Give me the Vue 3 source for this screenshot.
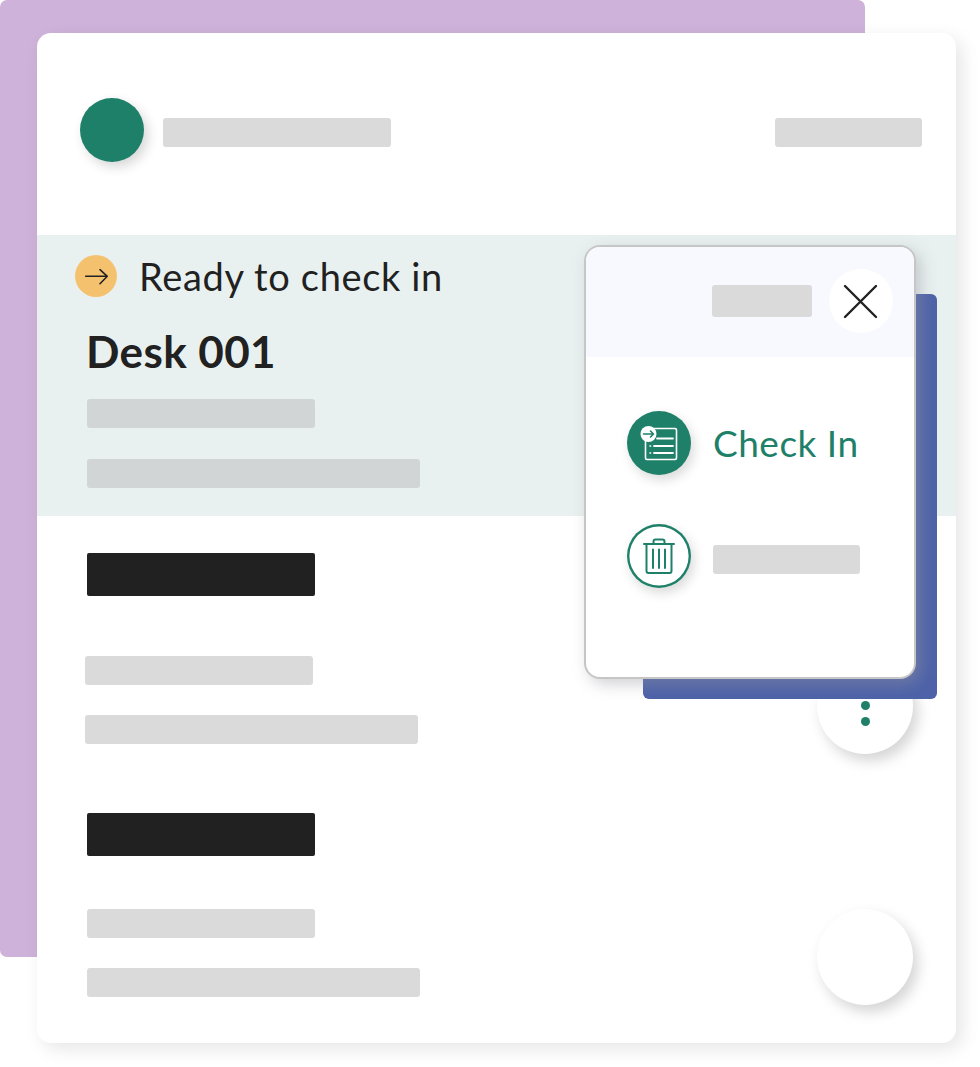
<script setup>
</script>

<template>
  <main class="scene">
    <div class="backdrop"></div>
    <section class="card">
      <header class="top">
        <div class="avatar"></div>
        <div class="bar w228 name"></div>
        <div class="bar w147 tail"></div>
      </header>

      <section class="band">
        <div class="status">
          <span class="arrow-badge">
            <svg width="42" height="42" viewBox="0 0 42 42" fill="none" stroke="#212121" stroke-width="1.6" stroke-linecap="round" stroke-linejoin="round">
              <path d="M10.7 21.3H32.3M25 14.7l7.3 6.6-7.3 7.4" />
            </svg>
          </span>
          <span class="status-text">Ready to check in</span>
        </div>
        <h1 class="desk">Desk 001</h1>
        <div class="bar w228 tinted first"></div>
        <div class="bar w333 tinted second-tight"></div>
      </section>

      <section class="entry one">
        <div class="block"></div>
        <div class="bar w228 shifted first-after"></div>
        <div class="bar w333 shifted second"></div>
      </section>

      <section class="entry two">
        <div class="block"></div>
        <div class="bar w228 first-after-b"></div>
        <div class="bar w333 second"></div>
      </section>

      <div class="fab kebab">
        <i></i><i></i><i></i>
      </div>
      <div class="fab lower"></div>
    </section>

    <div class="blue-sheet"></div>
    <aside class="menu">
      <div class="menu-head">
        <div class="bar head-bar"></div>
        <button class="close" aria-label="Close">
          <svg width="64" height="64" viewBox="0 0 64 64" fill="none" stroke="#212121" stroke-width="2.4" stroke-linecap="round">
            <path d="M16 17L47 48M47 17L16 48" />
          </svg>
        </button>
      </div>
      <div class="menu-body">
        <div class="menu-row">
          <span class="round solid">
            <svg width="64" height="64" viewBox="0 0 64 64" fill="none" stroke="#fff" stroke-width="1.6" stroke-linecap="round" stroke-linejoin="round">
              <rect x="18.5" y="17.5" width="31" height="31" rx="1.5" />
              <path stroke-width="1.8" d="M30 27.5H46M27 35H46M27 42H46" />
              <path stroke-width="1.6" d="M23 35h.6M23 42h.6" />
              <circle cx="21.5" cy="23" r="8" fill="#fff" stroke="none" />
              <path stroke="#1f8069" stroke-width="1.6" d="M16.5 23H26.5M23.5 20l3 3-3 3" />
            </svg>
          </span>
          <span class="check-label">Check In</span>
        </div>
        <div class="menu-row second-row">
          <span class="round outline">
            <svg width="64" height="64" viewBox="0 0 64 64" fill="none" stroke="#1f8069" stroke-width="2" stroke-linecap="round" stroke-linejoin="round">
              <path d="M17 20H47M26.5 20v-2.5q0-2 2-2h7q2 0 2 2V20" />
              <path d="M19.5 20v27q0 2 2 2h21q2 0 2-2V20" />
              <path d="M26 25.5V44M32 25.5V44M38 25.5V44" />
            </svg>
          </span>
          <div class="bar action-bar"></div>
        </div>
      </div>
    </aside>
  </main>
</template>

<style scoped>
.scene {
  position: relative;
  width: 980px;
  height: 1067px;
  overflow: hidden;
  background: #fff;
  font-family: "Lato", "Noto Sans", sans-serif;
  color: #212121;
}
.backdrop {
  position: absolute;
  left: 0;
  top: 0;
  width: 865px;
  height: 957px;
  background: #cfb2d9;
  border-radius: 7px;
}
.card {
  position: absolute;
  left: 37px;
  top: 33px;
  width: 919px;
  height: 1010px;
  background: #fff;
  border-radius: 14px;
  box-shadow: 6px 6px 18px rgba(0, 0, 0, 0.1);
}
.top {
  display: flex;
  align-items: center;
  height: 202px;
  padding: 0 34px 8px 43px;
  box-sizing: border-box;
}
.avatar {
  width: 64px;
  height: 64px;
  border-radius: 50%;
  background: #1f8069;
  box-shadow: 4px 5px 12px rgba(0, 0, 0, 0.16);
}
.bar {
  height: 29px;
  background: #dadada;
  border-radius: 3px;
}
.w228 { width: 228px; }
.w333 { width: 333px; }
.w147 { width: 147px; }
.name { margin: 4px 0 0 19px; }
.tail { margin: 4px 0 0 auto; }
.band {
  height: 281px;
  box-sizing: border-box;
  padding: 20px 0 0 50px;
  background: #e9f1f0;
}
.status {
  display: flex;
  align-items: center;
  height: 42px;
  margin-left: -12px;
}
.arrow-badge {
  display: block;
  width: 42px;
  height: 42px;
  border-radius: 50%;
  background: #f4c26f;
}
.arrow-badge svg { display: block; }
.status-text {
  margin-left: 22px;
  font-size: 38px;
  line-height: 42px;
  letter-spacing: 0.65px;
  white-space: nowrap;
}
.desk {
  margin: 29px 0 0 -1px;
  height: 50px;
  font-size: 44px;
  line-height: 50px;
  font-weight: 700;
  letter-spacing: 0.4px;
}
.tinted { background: #d1d5d5; }
.first { margin-top: 23px; }
.second-tight { margin-top: 31px; }
.second { margin-top: 30px; }
.entry { padding-left: 50px; }
.one { padding-top: 37px; }
.two { padding-top: 69px; }
.block {
  width: 228px;
  height: 43px;
  background: #212121;
  border-radius: 2px;
}
.shifted { margin-left: -2px; }
.first-after { margin-top: 60px; }
.first-after-b { margin-top: 53px; }
.fab {
  position: absolute;
  left: 780px;
  width: 96px;
  height: 96px;
  border-radius: 50%;
  background: #fff;
  box-shadow: 5px 7px 14px rgba(0, 0, 0, 0.17);
}
.kebab {
  top: 625px;
  display: flex;
  flex-direction: column;
  align-items: center;
  gap: 7px;
  padding-top: 27px;
  box-sizing: border-box;
}
.kebab i {
  display: block;
  width: 9px;
  height: 9px;
  border-radius: 50%;
  background: #1f8069;
}
.lower { top: 876px; }
.blue-sheet {
  position: absolute;
  left: 643px;
  top: 294px;
  width: 294px;
  height: 405px;
  background: #4d62a8;
  border-radius: 6px;
}
.menu {
  position: absolute;
  left: 584px;
  top: 245px;
  width: 332px;
  height: 434px;
  box-sizing: border-box;
  background: #fff;
  border: 2px solid #c6c6c6;
  border-radius: 16px;
  overflow: hidden;
  box-shadow: 5px 5px 16px rgba(150, 150, 160, 0.45);
}
.menu-head {
  display: flex;
  align-items: center;
  justify-content: flex-end;
  height: 110px;
  padding: 0 21px 2px 0;
  box-sizing: border-box;
  background: #f8f9fe;
}
.head-bar {
  width: 100px;
  height: 32px;
}
.close {
  display: block;
  width: 64px;
  height: 64px;
  margin: 0 0 0 17px;
  padding: 0;
  border: 0;
  border-radius: 50%;
  background: #fff;
}
.close svg { display: block; }
.menu-body { padding: 54px 0 0 41px; }
.menu-row {
  display: flex;
  align-items: center;
}
.second-row { margin-top: 49px; }
.round {
  flex: none;
  display: block;
  width: 64px;
  height: 64px;
  box-sizing: border-box;
  border-radius: 50%;
  box-shadow: 3px 5px 12px rgba(0, 0, 0, 0.15);
}
.round svg { display: block; }
.solid { background: #1f8069; }
.outline {
  background: #fff;
  box-shadow: 0 0 0 2.4px #1f8069 inset, 3px 5px 12px rgba(0, 0, 0, 0.15);
}
.check-label {
  margin-left: 22px;
  font-size: 37px;
  line-height: 64px;
  letter-spacing: 0.5px;
  color: #1f8069;
  white-space: nowrap;
}
.action-bar {
  width: 147px;
  margin: 6px 0 0 22px;
}
</style>
